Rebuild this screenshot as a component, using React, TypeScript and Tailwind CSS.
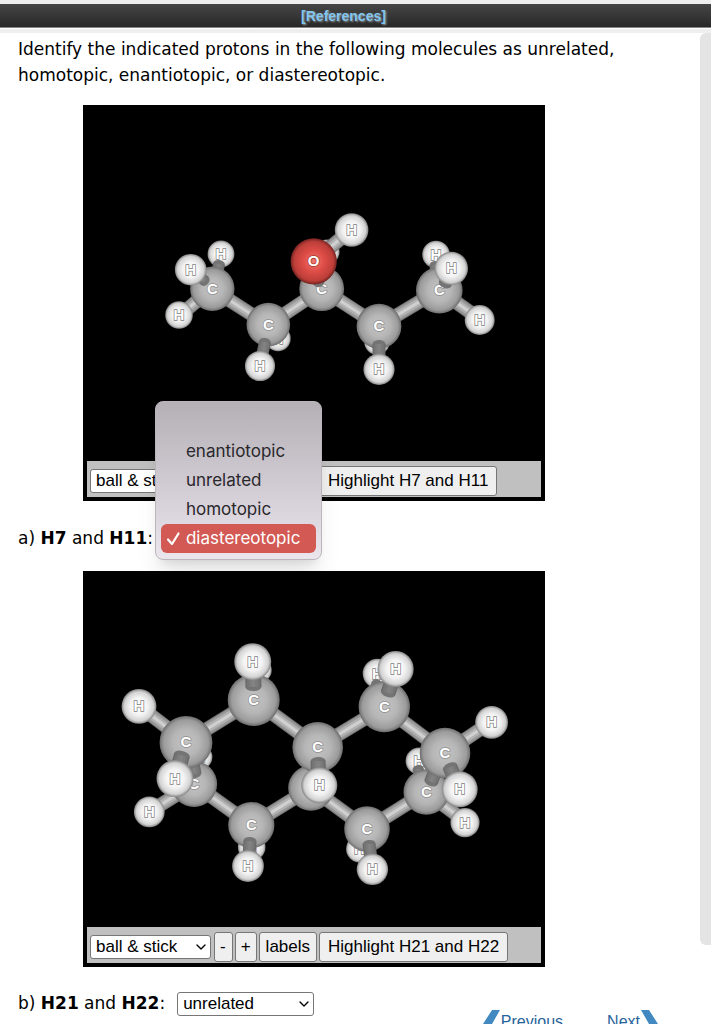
import React, { useState } from 'react';
import { ChevronDown } from 'lucide-react';

type Element = 'C' | 'H' | 'O';
type Atom = { el: Element; x: number; y: number; r: number };
type Bond = { from: [number, number]; to: [number, number]; near?: number };
type Part = Atom | Bond;

const atom = (el: Element, x: number, y: number, r: number): Atom => ({ el, x, y, r });
// near is the width of a stick that points at the viewer
const bond = (x1: number, y1: number, x2: number, y2: number, near?: number): Bond => ({
	from: [x1, y1],
	to: [x2, y2],
	near,
});

// Both scenes are listed back to front
const pentanol: Part[] = [
	atom('H', 327, 252, 12.5),
	atom('H', 278, 338.5, 12.7),
	atom('H', 377, 342, 12.7),
	atom('H', 221, 254, 13.4),
	atom('H', 436, 254.5, 13.8),
	bond(212, 289, 268, 325),
	bond(268, 325, 322, 289),
	bond(322, 289, 379, 326),
	bond(379, 326, 439, 290),
	bond(184, 312, 212, 288),
	atom('H', 179, 315, 13.8),
	bond(439, 290, 474, 315),
	bond(219, 264, 216, 280, 12),
	bond(435, 265, 436, 280, 11),
	atom('C', 212.3, 288.7, 22.2),
	atom('C', 321.7, 288.7, 22.4),
	atom('C', 439.3, 290.3, 23.3),
	bond(205, 281, 196, 274, 11),
	bond(445, 284, 449, 274, 13),
	atom('H', 190.7, 269.7, 15.8),
	atom('H', 451.3, 268.4, 16.7),
	atom('H', 479.7, 320, 15),
	atom('C', 268.3, 324.6, 21.8),
	atom('C', 379, 326.2, 22.4),
	bond(265, 342, 262, 356, 12),
	bond(379, 344, 379, 358, 13),
	atom('H', 260, 366, 15.1),
	atom('H', 379, 369.3, 15.6),
	bond(319, 283, 317, 276, 11),
	bond(321, 255, 345, 235),
	atom('O', 313.7, 261.3, 23.1),
	atom('H', 351.6, 230, 16.8),
];

const decalin: Part[] = [
	atom('H', 259, 670, 12.7),
	atom('H', 377.5, 673.5, 14.8),
	atom('H', 200, 757, 12.4),
	atom('H', 419, 761, 13.4),
	atom('H', 251.7, 847, 13.8),
	atom('H', 359.5, 849, 13.4),
	bond(254, 700, 186, 742),
	bond(254, 700, 318, 747),
	bond(318, 747, 384, 707),
	bond(384, 707, 445, 753),
	bond(194, 784, 251, 825),
	bond(251, 825, 311, 788),
	bond(311, 788, 367, 829),
	bond(367, 829, 426, 792),
	bond(139, 706, 186, 742),
	bond(445, 753, 491, 722),
	bond(149, 812, 194, 784),
	bond(426, 792, 462, 819),
	bond(376, 683, 379, 692, 10),
	bond(418, 769, 421, 780, 11),
	atom('C', 194, 784, 23.1),
	atom('C', 426.3, 792, 22.8),
	atom('C', 311, 788, 22.8),
	bond(195, 774, 192, 758, 13),
	bond(431, 782, 439, 762, 14),
	atom('C', 251.3, 825, 23.1),
	atom('C', 367, 829, 22.8),
	atom('C', 253.7, 700, 26),
	atom('C', 384.3, 706.6, 25.7),
	atom('C', 186, 742.4, 26.4),
	atom('C', 317.7, 747.3, 25.3),
	atom('C', 445, 753, 25.3),
	bond(250, 841, 249, 856, 13),
	bond(369, 844, 371, 859, 13),
	bond(253.5, 687, 253, 668, 16),
	bond(388, 693, 394, 676, 15),
	bond(182, 755, 177, 773, 16),
	bond(318, 761, 319, 780, 15),
	bond(450, 767, 457, 784, 15),
	atom('H', 139, 706.4, 17.4),
	atom('H', 149.3, 811.8, 15.4),
	atom('H', 248, 866, 15.9),
	atom('H', 372.4, 869.3, 15.7),
	atom('H', 491.6, 722.3, 16.4),
	atom('H', 465, 822.6, 14.6),
	atom('H', 252.7, 661.7, 18.5),
	atom('H', 395.6, 669, 18.1),
	atom('H', 175, 778.6, 18.5),
	atom('H', 319.3, 785.3, 18),
	atom('H', 459.7, 789.3, 18),
];

const nearShades = ['#686868', '#747474', '#7c7c7c', '#828282'];
const farShades = ['#767676', '#989898', '#b2b2b2', '#d0d0d0'];

function Stick({ from, to, near }: Bond) {
	const shades = near ? nearShades : farShades;
	const width = near ?? 14;
	const angle = (Math.atan2(to[1] - from[1], to[0] - from[0]) * 180) / Math.PI;
	return (
		<>
			{near && (
				<ellipse
					cx={from[0]}
					cy={from[1]}
					rx="4"
					ry={near / 2}
					fill={nearShades[1]}
					transform={`rotate(${angle} ${from[0]} ${from[1]})`}
				/>
			)}
			{shades.map((stroke, i) => (
				<line
					key={stroke}
					x1={from[0]}
					y1={from[1]}
					x2={to[0]}
					y2={to[1]}
					stroke={stroke}
					strokeWidth={width * [1, 0.84, 0.54, 0.22][i]}
				/>
			))}
		</>
	);
}

const outlines: Record<Element, string> = { C: '#8c8c8c', H: '#7c7c7c', O: '#a03028' };

function Ball({ el, x, y, r, scene }: Atom & { scene: string }) {
	return (
		<>
			<circle cx={x} cy={y} r={r} fill={`url(#${scene}-${el})`} />
			<text
				x={x}
				y={y + 5}
				textAnchor="middle"
				fill="#ffffff"
				stroke={outlines[el]}
				strokeWidth="1.4"
				paintOrder="stroke"
				className="font-['Liberation_Sans',Arial,sans-serif] text-[15px] font-bold"
			>
				{el}
			</text>
		</>
	);
}

function Molecule({ id, title, viewBox, parts }: { id: string; title: string; viewBox: string; parts: Part[] }) {
	return (
		<svg viewBox={viewBox} role="img" aria-label={title} className="block w-full bg-black">
			<defs>
				<radialGradient id={`${id}-C`}>
					<stop offset="0" stopColor="#c4c4c4" />
					<stop offset="0.5" stopColor="#b6b6b6" />
					<stop offset="0.85" stopColor="#9b9b9b" />
					<stop offset="1" stopColor="#6c6c6c" />
				</radialGradient>
				<radialGradient id={`${id}-H`}>
					<stop offset="0" stopColor="#ffffff" />
					<stop offset="0.5" stopColor="#f3f3f3" />
					<stop offset="0.84" stopColor="#d2d2d2" />
					<stop offset="1" stopColor="#828282" />
				</radialGradient>
				<radialGradient id={`${id}-O`}>
					<stop offset="0" stopColor="#ef7770" />
					<stop offset="0.45" stopColor="#df4d47" />
					<stop offset="0.85" stopColor="#bd3e39" />
					<stop offset="1" stopColor="#742320" />
				</radialGradient>
			</defs>
			{parts.map((part, i) =>
				'el' in part ? <Ball key={i} {...part} scene={id} /> : <Stick key={i} {...part} />
			)}
		</svg>
	);
}

interface SelectProps {
	label: string;
	options: string[];
	initial: string;
	className: string;
}

const Select: React.FC<SelectProps> = ({ label, options, initial, className }) => (
	<span className={`relative inline-block ${className}`}>
		<select
			aria-label={label}
			defaultValue={initial}
			className="block h-6 w-full appearance-none rounded-[3px] border border-[#767676] bg-white pl-[5px] pr-5 font-['Liberation_Sans',Arial,sans-serif] text-[17px] leading-[22px] text-black"
		>
			{options.map((option) => (
				<option key={option}>{option}</option>
			))}
		</select>
		<ChevronDown className="pointer-events-none absolute right-[2px] top-1 h-4 w-4 text-black" strokeWidth={2} />
	</span>
);

const ToolButton = ({ children }: { children: React.ReactNode }) => (
	<button className="h-[30px] rounded-[3px] border border-[#767676] bg-[#efefef] px-[5px] text-[17px] leading-7 whitespace-nowrap text-black">
		{children}
	</button>
);

interface ViewerProps {
	id: string;
	title: string;
	viewBox: string;
	parts: Part[];
	pair: string;
}

const Viewer: React.FC<ViewerProps> = ({ id, title, viewBox, parts, pair }) => (
	<section className="ml-[65px] w-full max-w-[462px] border-4 border-black bg-black">
		<Molecule id={id} title={title} viewBox={viewBox} parts={parts} />
		<div className="flex h-9 items-end gap-0.5 bg-[#c0c0c0] pb-px pl-[3px] font-['Liberation_Sans',Arial,sans-serif]">
			<Select
				label="Display style"
				options={['ball & stick', 'wireframe', 'space filling']}
				initial="ball & stick"
				className="mb-[3px] mr-px w-[121px]"
			/>
			<ToolButton><span className="pr-px">-</span></ToolButton>
			<ToolButton>+</ToolButton>
			<ToolButton><span className="px-px">labels</span></ToolButton>
			<ToolButton><span className="px-[3px]">Highlight {pair}</span></ToolButton>
		</div>
	</section>
);

const answers = ['', 'enantiotopic', 'unrelated', 'homotopic', 'diastereotopic'];

function AnswerMenu() {
	const [chosen, setChosen] = useState('diastereotopic');
	return (
		<ul
			role="listbox"
			aria-label="H7 and H11"
			className="absolute -bottom-[21px] left-0.5 z-10 w-[167px] rounded-lg border border-[#bbb6bc] bg-linear-to-b from-[#b4b0b6] to-[#ebe5ed] px-[5px] py-1.5 font-[Inter,sans-serif] text-[17px] text-[#29272b] shadow-xl"
		>
			{answers.map((answer) => (
				<li key={answer} role="option" aria-selected={answer === chosen}>
					<button
						aria-label={answer || 'No answer'}
						onClick={() => setChosen(answer)}
						className={`flex h-[29px] w-full items-center gap-1 rounded-md pl-[5px] text-left leading-[29px] ${
							answer === chosen ? 'bg-[#d35954] text-white' : ''
						}`}
					>
						<span className="w-4 shrink-0">
							{answer === chosen && (
								<svg viewBox="0 0 16 16" className="h-4 w-4" aria-hidden="true">
									<path
										d="M2 8.5l4 4.500L12.500 2.500"
										fill="none"
										stroke="currentColor"
										strokeWidth="2.2"
										strokeLinecap="round"
										strokeLinejoin="round"
									/>
								</svg>
							)}
						</span>
						{answer}
					</button>
				</li>
			))}
		</ul>
	);
}

export default function App() {
	return (
		<div className="flex h-screen flex-col overflow-hidden bg-white font-['DejaVu_Sans',Verdana,sans-serif] text-[17px] text-black">
			<header className="shrink-0 border-y-4 border-[#efefef] pb-px">
				<div className="flex h-6 items-center justify-center border-b border-[#858585] bg-linear-to-b from-[#464646] to-[#282828] pr-6">
					<a
						href="#references"
						className="font-['Liberation_Sans',Arial,sans-serif] text-sm font-bold text-[#82c6ee] [text-shadow:1px_1px_2px_#999]"
					>
						[References]
					</a>
				</div>
			</header>
			<div className="flex min-h-0 flex-1">
				<main className="min-w-0 flex-1 overflow-hidden pl-[18px] pt-[3px]">
					<p className="mb-[17px] max-w-[640px] leading-[26px]">
						Identify the indicated protons in the following molecules as unrelated, homotopic,
						enantiotopic, or diastereotopic.
					</p>
					<Viewer
						id="pentanol"
						title="3-Pentanol model"
						viewBox="87 109 454 352"
						parts={pentanol}
						pair="H7 and H11"
					/>
					<div className="mb-[19px] mt-[25px] flex h-[26px] items-center">
						<span className="whitespace-pre">a) <b>H7</b> and <b>H11</b>:</span>
						<div className="relative">
							<AnswerMenu />
						</div>
					</div>
					<Viewer
						id="decalin"
						title="Decalin model"
						viewBox="87 575 454 352"
						parts={decalin}
						pair="H21 and H22"
					/>
					<div className="mt-6 flex items-start justify-between">
						<div className="flex h-[26px] items-center gap-3">
							<span>b) <b>H21</b> and <b>H22</b>:</span>
							<Select
								label="H21 and H22"
								options={answers}
								initial="unrelated"
								className="w-[137px]"
							/>
						</div>
						<nav className="mr-[42px] mt-[19px] flex gap-11 font-['Liberation_Sans',Arial,sans-serif] text-base text-[#27639a]">
							<a href="#previous" className="flex">
								<svg viewBox="0 0 18 28" className="h-7 w-[18px]" aria-hidden="true">
									<path d="M9 0h8L9 14l8 14H9L0 14z" fill="#4189c0" />
								</svg>
								Previous
							</a>
							<a href="#next" className="flex">
								Next
								<svg viewBox="0 0 18 28" className="h-7 w-[18px]" aria-hidden="true">
									<path d="M9 0H1l8 14-8 14h8l9-14z" fill="#4189c0" />
								</svg>
							</a>
						</nav>
					</div>
				</main>
				<div className="mb-[79px] w-[11px] shrink-0 rounded-l-md bg-[#e4e4e4]" />
			</div>
		</div>
	);
}
